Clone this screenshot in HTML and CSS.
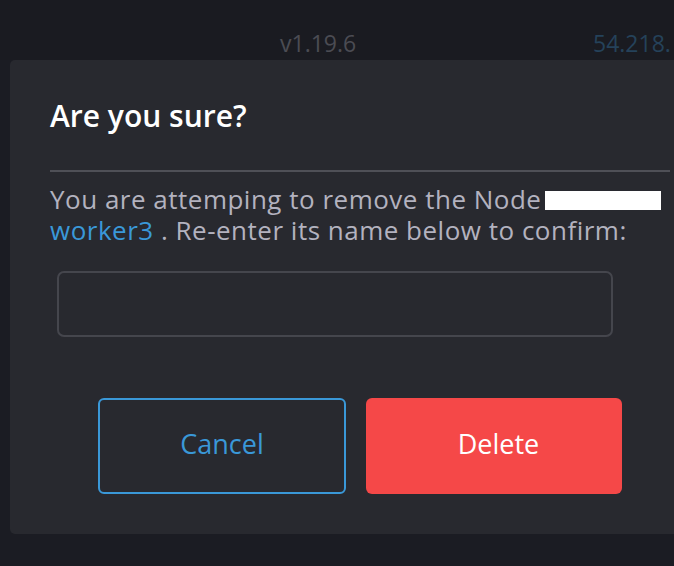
FILE: index.html
```html
<!DOCTYPE html>
<html lang="en">
<head>
<meta charset="utf-8">
<title>Are you sure?</title>
<link rel="stylesheet" href="styles.css">
</head>
<body>
<div class="topbar">
  <span class="col-spacer"></span>
  <span class="col version">v1.19.6</span>
  <span class="col ip">54.218.</span>
</div>
<div class="modal">
  <h2 class="title">Are you sure?</h2>
  <hr class="divider">
  <p class="message">You are attemping to remove the Node<span class="redact"></span><br><a class="node-link">worker3</a> . Re-enter its name below to confirm:</p>
  <input class="confirm-input" type="text" aria-label="Node name">
  <div class="actions">
    <button class="btn btn-cancel">Cancel</button>
    <button class="btn btn-delete">Delete</button>
  </div>
</div>
</body>
</html>
```

FILE: styles.css
```css
html, body {
  margin: 0;
  padding: 0;
}
body {
  width: 674px;
  height: 566px;
  overflow: hidden;
  background: #1b1c23;
  font-family: "Open Sans", "Noto Sans", sans-serif;
}
.topbar {
  height: 60px;
  display: flex;
  align-items: flex-end;
  background: #1a1b21;
  font-size: 23px;
  line-height: 30px;
  white-space: nowrap;
}
.col-spacer { width: 280px; flex: none; }
.col { flex: none; padding-bottom: 2px; }
.version { width: 313px; color: #4b4c53; }
.ip { color: #25425a; }

.modal {
  margin-left: 10px;
  width: 620px;
  padding: 36px 40px 40px;
  background: #28292f;
  border-radius: 5px;
  display: flex;
  flex-direction: column;
  align-items: flex-start;
}
.modal > * { flex: none; }
.title {
  margin: 0;
  font-size: 30px;
  line-height: 40px;
  font-weight: 600;
  color: #ffffff;
}
.divider {
  align-self: stretch;
  margin: 34px 0 0;
  border: 0;
  height: 2px;
  background: #4f5057;
}
.message {
  margin: 12px 0 0;
  font-size: 26px;
  line-height: 31px;
  letter-spacing: 0.5px;
  color: #b3b2bf;
}
.node-link { color: #3a98d8; }
.redact {
  display: inline-block;
  margin-left: 4px;
  width: 116px;
  height: 19px;
  background: #ffffff;
  vertical-align: -1px;
}
.confirm-input {
  margin: 25px 0 0 7px;
  width: 556px;
  height: 66px;
  box-sizing: border-box;
  background: transparent;
  border: 2px solid #45464d;
  border-radius: 7px;
  outline: none;
}
.actions {
  align-self: stretch;
  margin-top: 61px;
  display: flex;
  justify-content: center;
  gap: 20px;
}
.btn {
  height: 96px;
  box-sizing: border-box;
  border-radius: 6px;
  font-family: "Open Sans", "Noto Sans", sans-serif;
  font-size: 27px;
  display: flex;
  align-items: center;
  justify-content: center;
  padding: 0 0 5px;
}
.btn-cancel {
  width: 248px;
  background: transparent;
  border: 2px solid #3a98d8;
  color: #3a98d8;
}
.btn-delete {
  width: 256px;
  padding-left: 9px;
  background: #f54848;
  border: 0;
  color: #ffffff;
  font-weight: 500;
}
```
